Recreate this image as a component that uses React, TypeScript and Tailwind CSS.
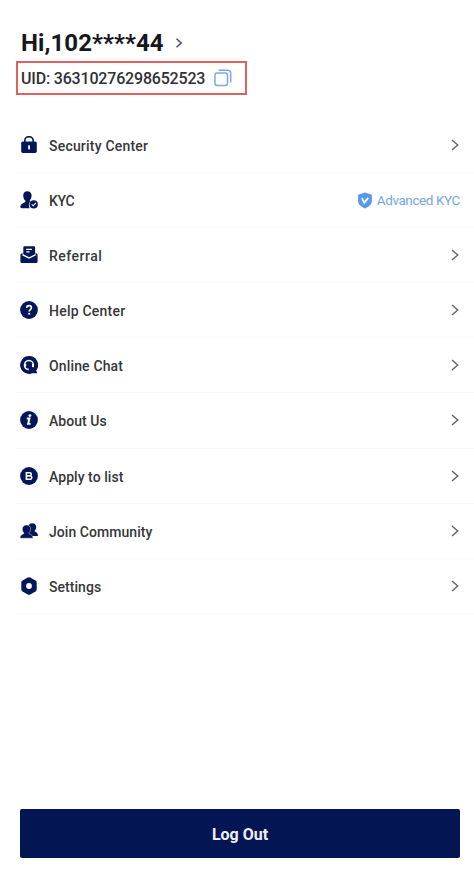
import type { ReactNode } from "react";

const NAVY = "#04165a";

function Icon({ children }: { children: ReactNode }) {
  return (
    <svg viewBox="0 0 18 18" className="h-[18px] w-[18px] shrink-0" fill={NAVY}>
      {children}
    </svg>
  );
}

function Chevron() {
  return (
    <svg viewBox="0 0 8 12" className="mr-px h-3 w-2" fill="none" stroke="#686868" strokeWidth="1.5">
      <path d="M1 1 6.7 6 1 11" />
    </svg>
  );
}

const lock = (
  <Icon>
    <path d="M4.800 7V4.800a4.200 4.200 0 0 1 8.400 0V7" fill="none" stroke={NAVY} strokeWidth="1.600" />
    <rect x="1.200" y="5.600" width="15.600" height="11.300" rx="1.600" />
    <rect x="8.100" y="9.200" width="1.900" height="4.200" rx=".6" fill="#fff" />
  </Icon>
);
const person = (
  <Icon>
    <path d="M7.300.2c2.800 0 4.400 1.900 4.300 4.600-.1 1.800-.8 3.400-1.700 4.300l.2 1.500c-1.300 1.300-1.700 3.900-.5 6.600H2C.8 17.200.2 16.500.4 15.500c.3-2.200 1.900-2.900 4.900-4.500V9.500C4 8.500 3.300 6.900 3.200 5 3.100 2.200 4.700.2 7.300.2Z" />
    <circle cx="13.700" cy="13.400" r="4.100" />
    <path d="m11.700 13.300 1.500 1.500 2.700-3" fill="none" stroke="#fff" strokeWidth="1.100" />
  </Icon>
);
const mail = (
  <Icon>
    <path d="M4.700.3h9c.9 0 1.400.5 1.400 1.400v6.500L9.200 11.300 3.300 8.200V1.700c0-.9.500-1.400 1.400-1.400Z" />
    <path d="M6.200 3.300h5.700M6.200 5.800h3.400" stroke="#fff" strokeWidth="1.200" />
    <path d="M.4 8.600 9 12.700l8.600-4.100v6.600c0 1.200-.7 1.900-1.900 1.900H2.300c-1.200 0-1.900-.7-1.900-1.900Z" />
    <path d="M.4 8.700 2.500 6.600v2.800ZM17.600 8.700l-2-2.100v2.800Z" />
  </Icon>
);
const help = (
  <Icon>
    <circle cx="9" cy="9" r="8.900" />
    <path d="M6.700 7c0-1.500 1-2.400 2.400-2.400s2.300.8 2.300 2.100c0 1.800-2.200 1.900-2.200 3.800" fill="none" stroke="#fff" strokeWidth="1.600" />
    <circle cx="9.200" cy="12.800" r="1.050" fill="#fff" />
  </Icon>
);
const chat = (
  <Icon>
    <path d="M9 .1a8.900 8.900 0 1 0 3.500 17.100h4.700l-1-2.700A8.900 8.900 0 0 0 9 .1Z" />
    <path d="M8.800 13.500C6 13.300 4.500 11.500 4.500 9a4.400 4.400 0 0 1 8.800 0v2.200" fill="none" stroke="#fff" strokeWidth="1.500" />
    <path d="M5.300 7.800v2.800M12.900 7.800v3.200" stroke="#fff" strokeWidth="1.800" />
  </Icon>
);
const info = (
  <Icon>
    <circle cx="9" cy="9" r="8.900" />
    <circle cx="9.900" cy="4.600" r="1.450" fill="#fff" />
    <path d="M6.800 7.500h2.700l-1.400 5.400h2.500" fill="none" stroke="#fff" strokeWidth="1.900" />
  </Icon>
);
const coin = (
  <Icon>
    <circle cx="9" cy="9" r="8.900" />
    <path d="M6.400 5.800h3.300c2.100 0 2.100 3.100 0 3.100H6.400V5.800Zm0 3.100h3.700c2.200 0 2.200 3.400 0 3.400H6.400V8.900Z" fill="none" stroke="#fff" strokeWidth="1.600" />
  </Icon>
);
const people = (
  <Icon>
    <path d="M12.300 1.300c2.500 0 3.900 1.500 3.900 3.700 0 1.500-.5 2.700-1.400 3.500v1.100c2.200 1 3 1.600 3.200 4.300H9L8 5.500c0-2.500 1.800-4.200 4.300-4.200Z" />
    <path d="M6.500 3c2.600 0 4.200 1.700 4.100 4.100 0 1.600-.7 2.900-1.600 3.700v.9c2.600 1 3.800 1.600 4 4.500H0c.2-2.900 1.400-3.500 3.800-4.500v-.9C2.900 10 2.300 8.700 2.300 7.100 2.300 4.700 4 3 6.500 3Z" stroke="#fff" strokeWidth=".4" />
  </Icon>
);
const settings = (
  <Icon>
    <path d="M7.800.5a2.400 2.400 0 0 1 2.400 0l5.300 3.100a2.400 2.400 0 0 1 1.200 2.100v6.600a2.400 2.400 0 0 1-1.200 2.100l-5.300 3.100a2.400 2.400 0 0 1-2.400 0l-5.300-3.100a2.400 2.400 0 0 1-1.200-2.100V5.700a2.400 2.400 0 0 1 1.200-2.100Z" />
    <circle cx="9" cy="9" r="2.900" fill="#fff" />
  </Icon>
);

const rows = [
  { icon: lock, label: "Security Center", track: "tracking-[0.2px]" },
  { icon: person, label: "KYC", track: "tracking-[-0.3px]" },
  { icon: mail, label: "Referral", track: "tracking-[0.5px]" },
  { icon: help, label: "Help Center", track: "tracking-[0.23px]" },
  { icon: chat, label: "Online Chat", track: "tracking-[0.15px]" },
  { icon: info, label: "About Us", track: "tracking-[0.05px]" },
  { icon: coin, label: "Apply to list", track: "tracking-[0.05px]" },
  { icon: people, label: "Join Community", track: "tracking-[0.05px]" },
  { icon: settings, label: "Settings", track: "tracking-[0.05px]" },
];

function AdvancedBadge() {
  return (
    <span className="flex items-center gap-1 pt-px text-[13.500px] text-[#72a7e8]">
      <svg viewBox="0 0 16 18" className="h-[17px] w-4" fill="#5799ef">
        <path d="M8 .5 15.300 3v6.500c0 3.600-3 6-7.300 8-4.300-2-7.300-4.400-7.300-8V3Z" />
        <path d="m4.700 6.500 2.500 4.700 4.300-5" fill="none" stroke="#fff" strokeWidth="1.900" />
      </svg>
      <span className="tracking-[-0.400px]">Advanced KYC</span>
    </span>
  );
}

export default function App() {
  return (
    <main className="flex h-[883px] w-[474px] flex-col bg-white font-['Roboto','Liberation_Sans',sans-serif]">
      <header className="h-[117.600px] pt-[27px]">
        <div className="flex h-8 items-center gap-[11px] pl-[21px]">
          <h1 className="text-[24px] font-bold tracking-[0.080px] text-[#17181c]">Hi,102****44</h1>
          <svg viewBox="0 0 8 10" className="h-[10px] w-2" fill="none" stroke="#424c70" strokeWidth="1.500">
            <path d="m1.500 .8 4.700 4.200-4.700 4.200" />
          </svg>
        </div>
        <div className="mt-[2px] ml-4 flex h-[34px] w-[231px] items-center border-2 border-[#df6262] pl-[3px]">
          <span className="w-[185px] pt-[2px] text-[16px] font-medium tracking-[-0.180px] whitespace-nowrap text-[#303136]">UID: 36310276298652523</span>
          <svg viewBox="0 0 18 18" className="ml-2 h-[18px] w-[18px]" fill="none" stroke="#7ba8ec" strokeWidth="1.500">
            <rect x="1" y="4" width="12.500" height="12.500" rx="2.200" />
            <path d="M4.500 1.300h9.200a3 3 0 0 1 3 3v9.200" />
          </svg>
        </div>
      </header>
      <ul className="ml-4">
        {rows.map((row) => (
          <li key={row.label} className="flex h-[55.170px] items-center border-b border-[#f8f8f8] pr-[14px] pl-1">
            {row.icon}
            <span className={`ml-[11px] flex-1 pt-[3px] text-[14px] font-medium text-[#36373a] ${row.track}`}>{row.label}</span>
            {row.label === "KYC" ? <AdvancedBadge /> : <Chevron />}
          </li>
        ))}
      </ul>
      <button className="mt-auto mr-[14px] mb-[25px] ml-5 h-[49px] shrink-0 rounded-[2px] bg-[#041554] pt-[3px] text-[16px] font-bold text-[#edf0fb]">
        Log Out
      </button>
    </main>
  );
}
